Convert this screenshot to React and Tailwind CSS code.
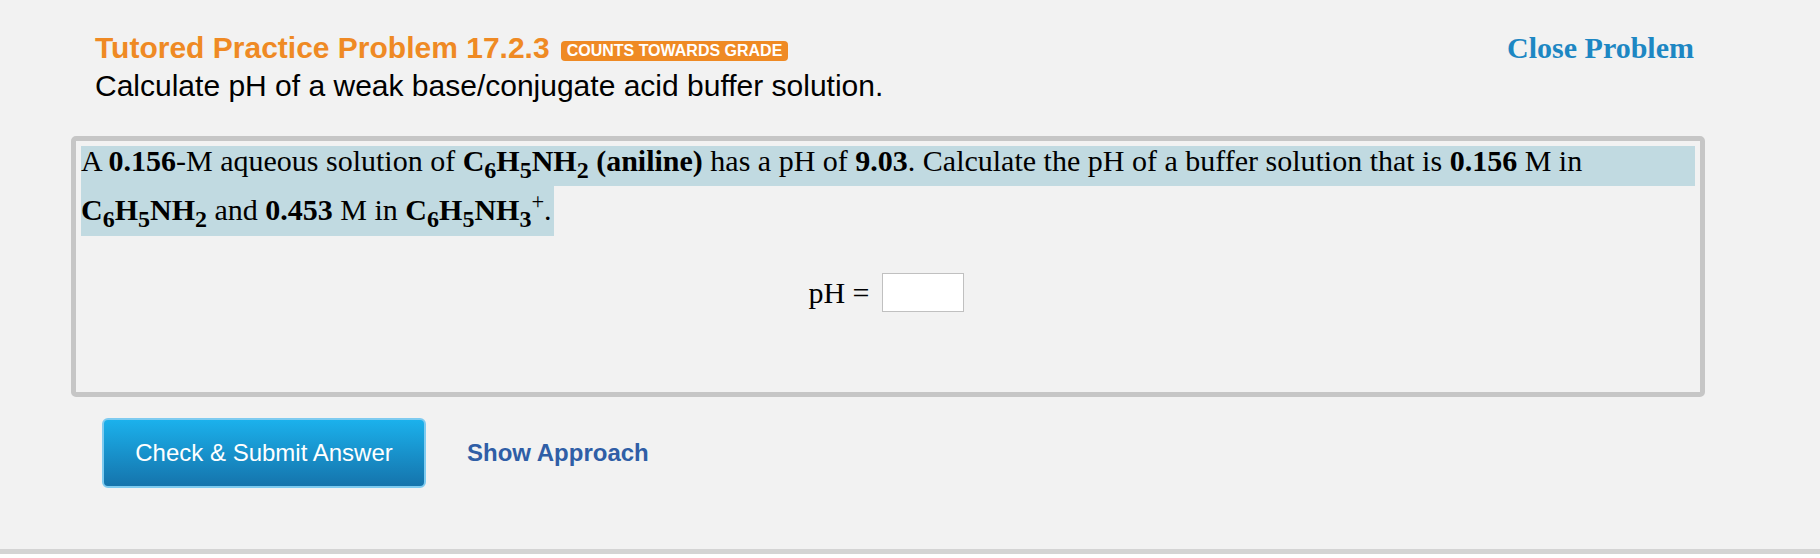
import React from 'react';

const serif = { fontFamily: '"Liberation Serif", "Times New Roman", serif' };

function Formula({ n3 }) {
  return (
    <b>
      C<sub className="text-[80%] bottom-[-0.3em]">6</sub>H<sub className="text-[80%] bottom-[-0.3em]">5</sub>NH
      <sub className="text-[80%] bottom-[-0.3em]">{n3 ? 3 : 2}</sub>
    </b>
  );
}

export default function App() {
  return (
    <div className="min-h-[558px] bg-[#f2f2f2] font-['Liberation_Sans',Arial,sans-serif] flex flex-col">
      <div className="flex-1 pl-[71px] pr-[115px]">
        {/* header */}
        <div className="flex justify-between items-start pt-[31px] pl-[24px] pr-[11px]">
          <div>
            <div className="flex items-center">
              <h1 className="text-[30px] leading-[34px] font-bold text-[#ef8a24]">Tutored Practice Problem 17.2.3</h1>
              <span className="ml-[11px] mt-[6px] bg-[#ef8a24] text-white text-[16px] leading-[20px] font-bold rounded-[4px] px-[6px]">
                COUNTS TOWARDS GRADE
              </span>
            </div>
            <p className="mt-[4px] text-[30px] leading-[34px] text-black">
              Calculate pH of a weak base/conjugate acid buffer solution.
            </p>
          </div>
          <a href="#" className="text-[30px] leading-[34px] font-bold text-[#1d87c3]" style={serif}>
            Close Problem
          </a>
        </div>

        {/* question box */}
        <div className="mt-[33px] h-[261px] border-[5px] border-[#c6c6c6] rounded-[5px] p-[5px]" style={serif}>
          <div className="text-[30px] text-black">
            <div className="bg-[#c1dae1] h-[40px] leading-[29px] whitespace-nowrap">
              A <b>0.156</b>-M aqueous solution of <Formula /> <b>(aniline)</b> has a pH of <b>9.03</b>. Calculate the pH of a buffer solution that is <b>0.156</b> M in
            </div>
            <div className="h-[50px] leading-[47px]">
              <span className="inline-block align-top bg-[#c1dae1] h-[50px] whitespace-nowrap pr-[2px]">
                <Formula /> and <b>0.453</b> M in <Formula n3 /><sup>+</sup>.
              </span>
            </div>
          </div>
          <div className="mt-[37px] flex justify-center items-center gap-[12px] pr-[4px]">
            <span className="text-[30px] leading-[34px] text-black">pH =</span>
            <input type="text" className="w-[82px] h-[39px] bg-white border border-[#c0c0c0] outline-none" />
          </div>
        </div>

        {/* actions */}
        <div className="mt-[21px] pl-[31px] flex items-center">
          <button className="w-[324px] h-[70px] rounded-[6px] border-2 border-[#7ecbf0] bg-linear-to-b from-[#1bb1ec] to-[#1574ac] text-white text-[24px]">
            Check &amp; Submit Answer
          </button>
          <a href="#" className="ml-[41px] text-[24px] font-bold text-[#2f5ea6]">Show Approach</a>
        </div>
      </div>
      <div className="h-[5px] bg-[#d4d4d4]" />
      <div className="h-[4px] bg-white" />
    </div>
  );
}
